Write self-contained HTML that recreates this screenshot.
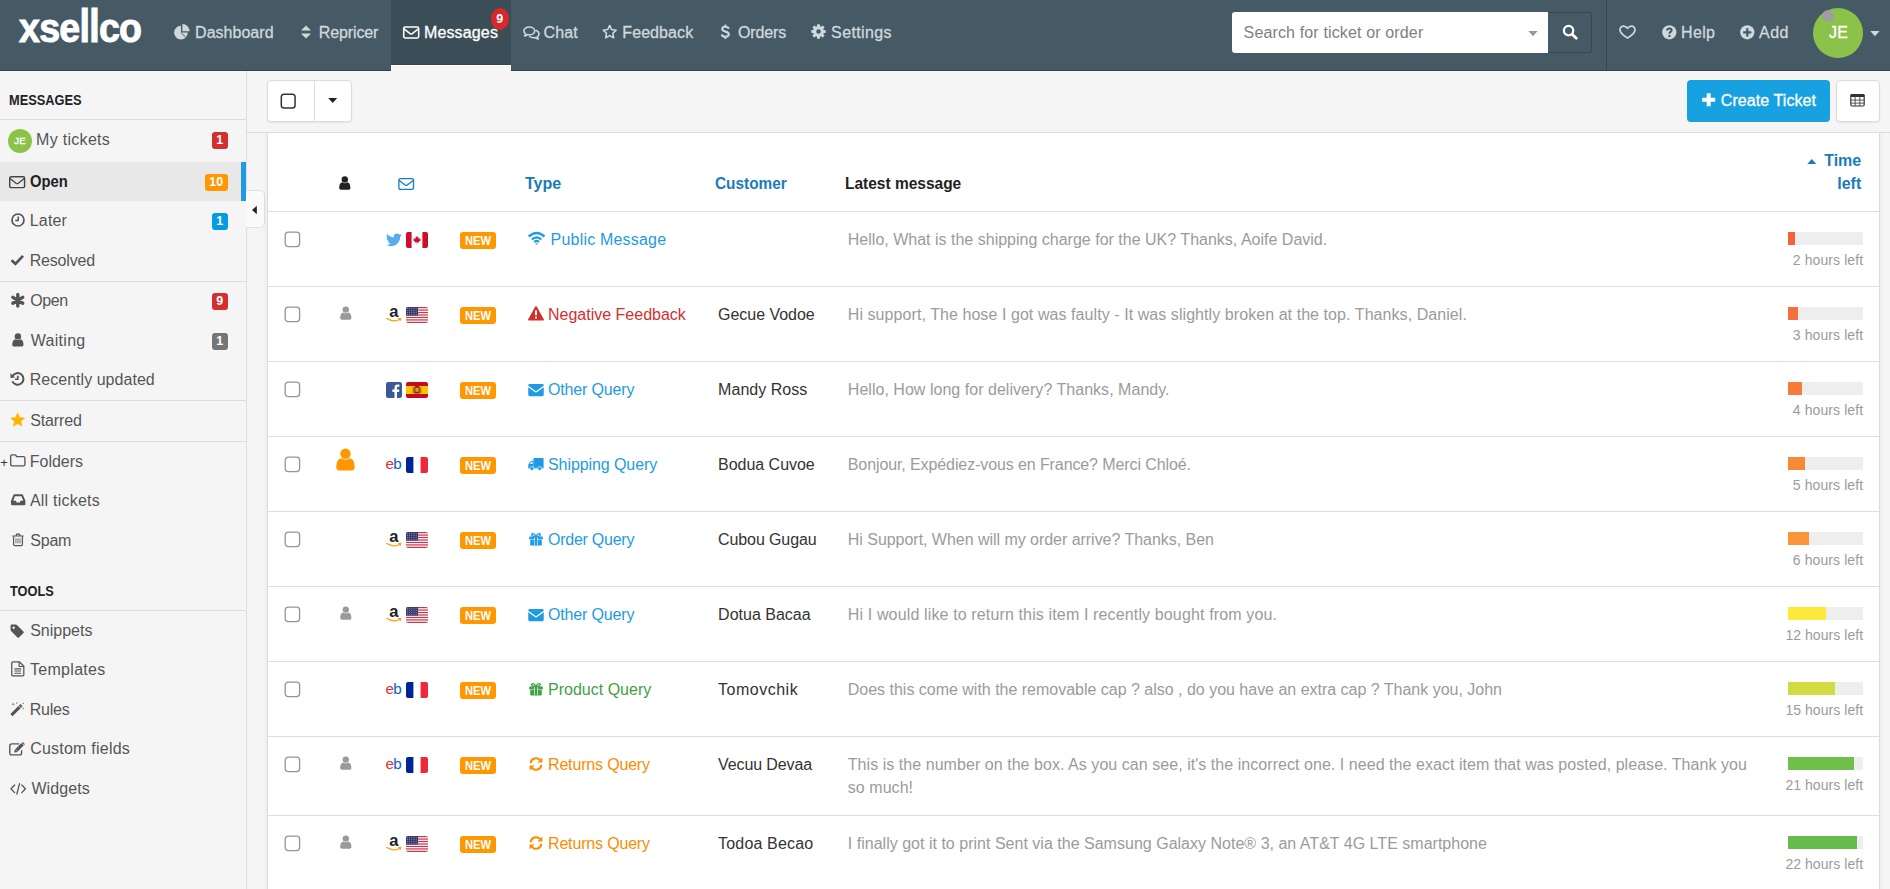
<!DOCTYPE html>
<html lang="en"><head><meta charset="utf-8"><title>Messages</title>
<style>
html,body{margin:0;padding:0}
body{width:1890px;height:889px;overflow:hidden;position:relative;background:#f5f5f5;font-family:"Liberation Sans",sans-serif;font-size:16px;color:#333}
div,span,svg{box-sizing:border-box}
.abs{position:absolute}
svg{display:block;overflow:visible}
</style></head><body>
<header>
<div class="abs" style="left:0;top:0;width:1890px;height:71px;background:#455a64;border-bottom:1px solid #34444c"></div>
<div class="abs" style="left:391px;top:0;width:120px;height:65px;background:#3b4e57;border-bottom:1px solid #35464e"></div>
<div class="abs" style="left:391px;top:65px;width:120px;height:6px;background:#f5f5f5;border-top:1px solid #fff"></div>
<div class="abs" style="left:19.2px;top:3.3px;height:60px;font-size:41.5px;line-height:50px;font-weight:700;color:#fff;white-space:nowrap;transform:scaleX(0.905);transform-origin:0 0;letter-spacing:-0.8px;-webkit-text-stroke:1px #fff">xse<span style="display:inline-block;transform:scaleY(1.13);transform-origin:50% 80%">ll</span>co</div>
<svg style="position:absolute;left:174.00px;top:23.80px;" width="16.4" height="15.6" viewBox="0 0 16 15"><path d="M6.8 1.6 A6.7 6.7 0 1 0 13.5 8.3 L6.8 8.3 Z" fill="#cfd8dc"/><path d="M8.2 0 A7 7 0 0 1 15.2 6.9 L8.2 6.9 Z" fill="#cfd8dc"/><path d="M6.8 8.3 L11.6 13" stroke="#455a64" stroke-width="0.9"/></svg>
<span style="position:absolute;left:195.10px;top:23.00px;font-size:16px;line-height:20px;color:#cfd8dc;white-space:nowrap;letter-spacing:0.020px;-webkit-text-stroke:0.3px;">Dashboard</span>
<svg style="position:absolute;left:301.30px;top:23.50px;" width="10" height="16" viewBox="0 0 10 16"><path d="M0 6.6 L5 1.4 L10 6.6 Z M0 9.4 L5 14.6 L10 9.4 Z" fill="#cfd8dc"/></svg>
<span style="position:absolute;left:318.80px;top:23.00px;font-size:16px;line-height:20px;color:#cfd8dc;white-space:nowrap;letter-spacing:-0.118px;-webkit-text-stroke:0.3px;">Repricer</span>
<svg style="position:absolute;left:403.00px;top:26.30px;" width="16.4" height="13" viewBox="0 0 16 12"><rect x="0.7" y="0.7" width="14.6" height="10.6" rx="1.3" fill="none" stroke="#fff" stroke-width="1.5"/><path d="M1 2.4 L6.9 7 Q8 7.8 9.1 7 L15 2.4" fill="none" stroke="#fff" stroke-width="1.5" stroke-linejoin="round"/></svg>
<span style="position:absolute;left:423.90px;top:23.00px;font-size:16px;line-height:20px;color:#fff;white-space:nowrap;letter-spacing:0.159px;-webkit-text-stroke:0.3px;">Messages</span>
<div class="abs" style="left:490.6px;top:8px;width:18px;height:21.5px;border-radius:50%;background:#d9272e"></div>
<span style="position:absolute;left:496.30px;top:9.00px;font-size:12.5px;line-height:20px;font-weight:700;color:#fff;white-space:nowrap;">9</span>
<svg style="position:absolute;left:523.00px;top:25.50px;" width="17" height="14" viewBox="0 0 17 14"><path d="M6.3 1 C9.3 1 11.7 2.7 11.7 4.9 C11.7 7.1 9.3 8.8 6.3 8.8 C5.7 8.8 5.2 8.7 4.7 8.6 C3.9 9.3 2.9 9.8 1.6 9.9 C2.2 9.3 2.6 8.6 2.7 7.8 C1.6 7.1 0.9 6.1 0.9 4.9 C0.9 2.7 3.3 1 6.3 1 Z" fill="none" stroke="#cfd8dc" stroke-width="1.6" stroke-linejoin="round"/><path d="M13.2 4.6 C14.9 5.3 16 6.5 16 7.9 C16 9.1 15.3 10.1 14.2 10.8 C14.3 11.6 14.7 12.3 15.3 12.9 C14 12.8 13 12.3 12.2 11.6 C11.7 11.7 11.2 11.8 10.6 11.8 C9 11.8 7.6 11.3 6.6 10.5" fill="none" stroke="#cfd8dc" stroke-width="1.6" stroke-linejoin="round" stroke-linecap="round"/></svg>
<span style="position:absolute;left:543.60px;top:23.00px;font-size:16px;line-height:20px;color:#cfd8dc;white-space:nowrap;letter-spacing:0.081px;-webkit-text-stroke:0.3px;">Chat</span>
<svg style="position:absolute;left:602.40px;top:24.00px;" width="15.4" height="15.4" viewBox="0 0 16 16"><polygon points="8.00,1.50 10.06,5.77 14.75,6.41 11.33,9.68 12.17,14.34 8.00,12.10 3.83,14.34 4.67,9.68 1.25,6.41 5.94,5.77" fill="none" stroke="#cfd8dc" stroke-width="1.6" stroke-linejoin="round"/></svg>
<span style="position:absolute;left:622.30px;top:23.00px;font-size:16px;line-height:20px;color:#cfd8dc;white-space:nowrap;letter-spacing:0.082px;-webkit-text-stroke:0.3px;">Feedback</span>
<svg style="position:absolute;left:720.00px;top:24.00px;" width="10.6" height="15.6" viewBox="0 0 11 16"><path d="M9 4.9 C8.8 3.5 7.5 2.8 5.6 2.8 C3.7 2.8 2.3 3.7 2.3 5.2 C2.3 6.8 3.8 7.3 5.6 7.8 C7.6 8.3 9.1 8.9 9.1 10.6 C9.1 12.2 7.6 13.1 5.6 13.1 C3.6 13.1 2.1 12.3 1.9 10.7" fill="none" stroke="#cfd8dc" stroke-width="2.2"/><path d="M5.6 0.4 V3.2 M5.6 12.8 V15.6" stroke="#cfd8dc" stroke-width="1.9"/></svg>
<span style="position:absolute;left:737.90px;top:23.00px;font-size:16px;line-height:20px;color:#cfd8dc;white-space:nowrap;letter-spacing:-0.092px;-webkit-text-stroke:0.3px;">Orders</span>
<svg style="position:absolute;left:811.20px;top:24.30px;" width="15" height="15" viewBox="0 0 16 16"><circle cx="8" cy="8" r="4.1" fill="none" stroke="#cfd8dc" stroke-width="3.3"/><rect x="6.4" y="0.3" width="3.2" height="3.4" rx="0.5" transform="rotate(0 8 8)" fill="#cfd8dc"/><rect x="6.4" y="0.3" width="3.2" height="3.4" rx="0.5" transform="rotate(45 8 8)" fill="#cfd8dc"/><rect x="6.4" y="0.3" width="3.2" height="3.4" rx="0.5" transform="rotate(90 8 8)" fill="#cfd8dc"/><rect x="6.4" y="0.3" width="3.2" height="3.4" rx="0.5" transform="rotate(135 8 8)" fill="#cfd8dc"/><rect x="6.4" y="0.3" width="3.2" height="3.4" rx="0.5" transform="rotate(180 8 8)" fill="#cfd8dc"/><rect x="6.4" y="0.3" width="3.2" height="3.4" rx="0.5" transform="rotate(225 8 8)" fill="#cfd8dc"/><rect x="6.4" y="0.3" width="3.2" height="3.4" rx="0.5" transform="rotate(270 8 8)" fill="#cfd8dc"/><rect x="6.4" y="0.3" width="3.2" height="3.4" rx="0.5" transform="rotate(315 8 8)" fill="#cfd8dc"/></svg>
<span style="position:absolute;left:831.10px;top:23.00px;font-size:16px;line-height:20px;color:#cfd8dc;white-space:nowrap;letter-spacing:0.375px;-webkit-text-stroke:0.3px;">Settings</span>
<div class="abs" style="left:1232px;top:12px;width:316px;height:41px;background:#fff;border-radius:3px 0 0 3px"></div>
<span style="position:absolute;left:1243.60px;top:23.00px;font-size:16px;line-height:20px;color:#808080;white-space:nowrap;letter-spacing:0.143px;">Search for ticket or order</span>
<svg style="position:absolute;left:1528.00px;top:31.00px;" width="10" height="5.6" viewBox="0 0 10 6"><path d="M0 0 H10 L5 5.6 Z" fill="#999"/></svg>
<div class="abs" style="left:1548px;top:12px;width:43.5px;height:40.5px;border:1px solid #37474f;border-left:0;border-radius:0 3px 3px 0"></div>
<svg style="position:absolute;left:1562.00px;top:24.00px;" width="16" height="16" viewBox="0 0 16 16"><circle cx="6.6" cy="6.6" r="4.7" fill="none" stroke="#fff" stroke-width="2.3"/><path d="M10.4 10.4 L14.3 14.3" stroke="#fff" stroke-width="2.8" stroke-linecap="round"/></svg>
<div class="abs" style="left:1606px;top:0;width:1px;height:70px;background:#37474f"></div>
<svg style="position:absolute;left:1619.20px;top:25.20px;" width="17" height="14" viewBox="0 0 17 14"><path d="M8.5 13 C8.5 13 1 8.6 1 4.7 C1 2.5 2.7 1 4.6 1 C6.2 1 7.6 1.9 8.5 3.3 C9.4 1.9 10.8 1 12.4 1 C14.3 1 16 2.5 16 4.7 C16 8.6 8.5 13 8.5 13 Z" fill="none" stroke="#cfd8dc" stroke-width="1.75" stroke-linejoin="round"/></svg>
<svg style="position:absolute;left:1661.50px;top:25.00px;" width="14.6" height="14.6" viewBox="0 0 15 15"><circle cx="7.5" cy="7.5" r="7.3" fill="#cfd8dc"/><path d="M5.2 5.7 C5.2 4.2 6.3 3.5 7.6 3.5 C8.9 3.5 9.9 4.3 9.9 5.5 C9.9 7.1 7.6 7.1 7.6 9" fill="none" stroke="#455a64" stroke-width="2.1"/><circle cx="7.6" cy="11.3" r="1.2" fill="#455a64"/></svg>
<span style="position:absolute;left:1681.10px;top:23.00px;font-size:16px;line-height:20px;color:#cfd8dc;white-space:nowrap;letter-spacing:0.311px;-webkit-text-stroke:0.3px;">Help</span>
<svg style="position:absolute;left:1740.00px;top:25.00px;" width="14.6" height="14.6" viewBox="0 0 15 15"><circle cx="7.5" cy="7.5" r="7.3" fill="#cfd8dc"/><path d="M7.5 3.3 V11.7 M3.3 7.5 H11.7" stroke="#455a64" stroke-width="2.3"/></svg>
<span style="position:absolute;left:1759.10px;top:23.00px;font-size:16px;line-height:20px;color:#cfd8dc;white-space:nowrap;letter-spacing:0.385px;-webkit-text-stroke:0.3px;">Add</span>
<div class="abs" style="left:1812.5px;top:7.6px;width:50.4px;height:50.4px;border-radius:50%;background:#8bc34a"></div>
<span style="position:absolute;left:1829.00px;top:23.00px;font-size:16px;line-height:20px;color:#fff;white-space:nowrap;letter-spacing:0.168px;-webkit-text-stroke:0.3px;">JE</span>
<div class="abs" style="left:1821.6px;top:9.6px;width:12px;height:12px;border-radius:50%;background:#9e9e9e"></div>
<svg style="position:absolute;left:1870.00px;top:30.80px;" width="9.8" height="5.6" viewBox="0 0 10 6"><path d="M0 0 H10 L5 5.6 Z" fill="#cfd8dc"/></svg>
</header>
<aside>
<div class="abs" style="left:246px;top:71px;width:1px;height:818px;background:#ddd"></div>
<span style="position:absolute;left:9.10px;top:90.00px;font-size:14px;line-height:20px;font-weight:700;color:#222;white-space:nowrap;display:inline-block;transform:scaleX(0.9156);transform-origin:left 50%;">MESSAGES</span>
<div class="abs" style="left:0;top:119px;width:246px;height:1px;background:#ddd"></div>
<div class="abs" style="left:8px;top:129px;width:24px;height:24px;border-radius:50%;background:#8bc34a"></div>
<span style="position:absolute;left:14.30px;top:131.00px;font-size:9.5px;line-height:20px;color:#fff;white-space:nowrap;letter-spacing:0.168px;-webkit-text-stroke:0.35px;">JE</span>
<span style="position:absolute;left:36.00px;top:130.00px;font-size:16px;line-height:20px;color:#555;white-space:nowrap;letter-spacing:0.302px;">My tickets</span>
<div class="abs" style="left:212px;top:132px;width:15.6px;height:17px;border-radius:3px;background:#d32f2f;color:#fff;font-size:12.5px;font-weight:700;line-height:17px;text-align:center">1</div>
<div class="abs" style="left:0;top:162px;width:246px;height:39px;background:#e8e8e8;border-right:5px solid #1e9be2"></div>
<svg style="position:absolute;left:9.10px;top:176.20px;" width="16.3" height="12.4" viewBox="0 0 16 12"><rect x="0.7" y="0.7" width="14.6" height="10.6" rx="1.3" fill="none" stroke="#444" stroke-width="1.4"/><path d="M1 2.4 L6.9 7 Q8 7.8 9.1 7 L15 2.4" fill="none" stroke="#444" stroke-width="1.4" stroke-linejoin="round"/></svg>
<span style="position:absolute;left:30.10px;top:172.00px;font-size:16px;line-height:20px;font-weight:700;color:#222;white-space:nowrap;display:inline-block;transform:scaleX(0.9229);transform-origin:left 50%;">Open</span>
<div class="abs" style="left:204.8px;top:174px;width:22.8px;height:17px;border-radius:3px;background:#ff9800;color:#fff;font-size:12.5px;font-weight:700;line-height:17px;text-align:center">10</div>
<svg style="position:absolute;left:10.90px;top:213.10px;" width="14" height="14" viewBox="0 0 14 14"><circle cx="7" cy="7" r="6" fill="none" stroke="#555" stroke-width="1.7"/><path d="M7.2 3.6 V7.4 H4.2" fill="none" stroke="#555" stroke-width="1.5"/></svg>
<span style="position:absolute;left:29.80px;top:211.00px;font-size:16px;line-height:20px;color:#555;white-space:nowrap;letter-spacing:0.143px;">Later</span>
<div class="abs" style="left:212px;top:213px;width:15.6px;height:17px;border-radius:3px;background:#039be5;color:#fff;font-size:12.5px;font-weight:700;line-height:17px;text-align:center">1</div>
<svg style="position:absolute;left:10.40px;top:254.40px;" width="14.6" height="11.6" viewBox="0 0 15 12"><path d="M1.6 6.4 L5.6 10.2 L13.4 1.9" fill="none" stroke="#555" stroke-width="2.9"/></svg>
<span style="position:absolute;left:29.70px;top:251.00px;font-size:16px;line-height:20px;color:#555;white-space:nowrap;letter-spacing:-0.181px;">Resolved</span>
<div class="abs" style="left:0;top:281px;width:246px;height:1px;background:#ddd"></div>
<svg style="position:absolute;left:10.60px;top:292.60px;" width="13.6" height="14.6" viewBox="0 0 14 15"><path d="M7 1.6 V13.4 M1.9 4.5 L12.1 10.5 M12.1 4.5 L1.9 10.5" stroke="#555" stroke-width="3.5" stroke-linecap="round"/></svg>
<span style="position:absolute;left:30.20px;top:291.00px;font-size:16px;line-height:20px;color:#555;white-space:nowrap;letter-spacing:-0.367px;">Open</span>
<div class="abs" style="left:212px;top:293px;width:15.6px;height:17px;border-radius:3px;background:#d32f2f;color:#fff;font-size:12.5px;font-weight:700;line-height:17px;text-align:center">9</div>
<svg style="position:absolute;left:11.60px;top:333.40px;" width="11.8" height="13.6" viewBox="0 0 12 14"><circle cx="6" cy="3.5" r="3.3" fill="#555"/><path d="M0.2 12.2 C0.2 8.6 1.5 6.6 3.4 6.4 C4.1 7 5 7.3 6 7.3 C7 7.3 7.9 7 8.6 6.4 C10.5 6.6 11.8 8.6 11.8 12.2 C11.8 13.3 11.1 14 10 14 H2 C0.9 14 0.2 13.3 0.2 12.2 Z" fill="#555"/></svg>
<span style="position:absolute;left:30.80px;top:331.00px;font-size:16px;line-height:20px;color:#555;white-space:nowrap;letter-spacing:0.280px;">Waiting</span>
<div class="abs" style="left:212px;top:333px;width:15.6px;height:17px;border-radius:3px;background:#757575;color:#fff;font-size:12.5px;font-weight:700;line-height:17px;text-align:center">1</div>
<svg style="position:absolute;left:10.40px;top:372.40px;" width="14.6" height="13.6" viewBox="0 0 15 14"><path d="M2.6 4.2 A6 6 0 1 1 2.4 9.6" fill="none" stroke="#555" stroke-width="2.1"/><path d="M0.3 1.4 L0.6 6.2 L5.3 5.6 Z" fill="#555"/><path d="M8 3.8 V7.5 H5.2" fill="none" stroke="#555" stroke-width="1.7"/></svg>
<span style="position:absolute;left:29.70px;top:370.00px;font-size:16px;line-height:20px;color:#555;white-space:nowrap;letter-spacing:0.034px;">Recently updated</span>
<div class="abs" style="left:0;top:400px;width:246px;height:1px;background:#ddd"></div>
<svg style="position:absolute;left:9.60px;top:411.60px;" width="15.4" height="15.4" viewBox="0 0 16 16"><polygon points="8.00,1.20 10.00,5.85 15.04,6.31 11.23,9.65 12.35,14.59 8.00,12.00 3.65,14.59 4.77,9.65 0.96,6.31 6.00,5.85" fill="#ffb300" stroke="#ffb300" stroke-width="0.8" stroke-linejoin="round"/></svg>
<span style="position:absolute;left:30.20px;top:411.00px;font-size:16px;line-height:20px;color:#555;white-space:nowrap;letter-spacing:-0.139px;">Starred</span>
<div class="abs" style="left:0;top:441px;width:246px;height:1px;background:#ddd"></div>
<span style="position:absolute;left:0.20px;top:453.00px;font-size:13px;line-height:20px;color:#333;white-space:nowrap;">+</span>
<svg style="position:absolute;left:9.60px;top:454.40px;" width="15.6" height="12.8" viewBox="0 0 16 13"><path d="M0.7 2.2 Q0.7 0.8 2.1 0.8 H5.2 Q6.4 0.8 6.4 2 Q6.4 2.6 7.2 2.6 H13.8 Q15.3 2.6 15.3 4.1 V10.7 Q15.3 12.2 13.8 12.2 H2.2 Q0.7 12.2 0.7 10.7 Z" fill="none" stroke="#555" stroke-width="1.35"/></svg>
<span style="position:absolute;left:29.70px;top:452.00px;font-size:16px;line-height:20px;color:#555;white-space:nowrap;letter-spacing:0.014px;">Folders</span>
<svg style="position:absolute;left:10.60px;top:494.00px;" width="14.4" height="11.6" viewBox="0 0 15 12"><path fill-rule="evenodd" d="M3.6 0.3 H11.4 Q12.2 0.3 12.5 1 L14.8 6.6 Q15 7 15 7.5 V10.6 Q15 11.8 13.8 11.8 H1.2 Q0 11.8 0 10.6 V7.5 Q0 7 0.2 6.6 L2.5 1 Q2.8 0.3 3.6 0.3 Z M4.1 2.2 L2.3 6.9 H5.1 L5.9 8.7 H9.1 L9.9 6.9 H12.7 L10.9 2.2 Z" fill="#555"/></svg>
<span style="position:absolute;left:29.90px;top:491.00px;font-size:16px;line-height:20px;color:#555;white-space:nowrap;letter-spacing:0.227px;">All tickets</span>
<svg style="position:absolute;left:11.60px;top:532.60px;" width="12" height="13.6" viewBox="0 0 13 14"><path d="M0.3 2.9 H12.7 M4.3 2.7 L5 0.9 H8 L8.7 2.7" fill="none" stroke="#555" stroke-width="1.3"/><path d="M1.7 3.2 V11.9 Q1.7 13.3 3.1 13.3 H9.9 Q11.3 13.3 11.3 11.9 V3.2" fill="none" stroke="#555" stroke-width="1.3"/><path d="M4.3 5.4 V10.8 M6.5 5.4 V10.8 M8.7 5.4 V10.8" stroke="#555" stroke-width="0.9"/></svg>
<span style="position:absolute;left:30.20px;top:531.00px;font-size:16px;line-height:20px;color:#555;white-space:nowrap;letter-spacing:-0.186px;">Spam</span>
<span style="position:absolute;left:10.10px;top:581.00px;font-size:14px;line-height:20px;font-weight:700;color:#222;white-space:nowrap;display:inline-block;transform:scaleX(0.9102);transform-origin:left 50%;">TOOLS</span>
<div class="abs" style="left:0;top:610px;width:246px;height:1px;background:#ddd"></div>
<svg style="position:absolute;left:10.40px;top:623.60px;" width="14.4" height="14.4" viewBox="0 0 15 15"><path fill-rule="evenodd" d="M0.6 1.8 Q0.6 0.6 1.8 0.6 H6 Q6.8 0.6 7.5 1.3 L14 7.8 Q14.8 8.6 14 9.4 L9.4 14 Q8.6 14.8 7.8 14 L1.3 7.5 Q0.6 6.8 0.6 6 Z M3.8 2.5 A1.3 1.3 0 1 0 3.81 2.5 Z" fill="#555"/></svg>
<span style="position:absolute;left:30.20px;top:621.00px;font-size:16px;line-height:20px;color:#555;white-space:nowrap;letter-spacing:-0.004px;">Snippets</span>
<svg style="position:absolute;left:10.80px;top:661.00px;" width="13.6" height="15.6" viewBox="0 0 14 16"><path d="M0.8 1.9 Q0.8 0.8 1.9 0.8 H8.6 L13.2 5.4 V14.1 Q13.2 15.2 12.1 15.2 H1.9 Q0.8 15.2 0.8 14.1 Z" fill="none" stroke="#555" stroke-width="1.3" stroke-linejoin="round"/><path d="M8.4 1 V5.6 H13" fill="none" stroke="#555" stroke-width="1.2"/><path d="M3.5 8 H10.5 M3.5 10.3 H10.5 M3.5 12.6 H10.5" stroke="#555" stroke-width="1.2"/></svg>
<span style="position:absolute;left:30.00px;top:660.00px;font-size:16px;line-height:20px;color:#555;white-space:nowrap;letter-spacing:0.290px;">Templates</span>
<svg style="position:absolute;left:10.20px;top:701.60px;" width="14.6" height="14.6" viewBox="0 0 15 15"><path d="M1.5 13.5 L11.8 3.2" stroke="#555" stroke-width="3.1" stroke-linecap="butt"/><path d="M9 4 L11 6" stroke="#f5f5f5" stroke-width="0.8"/><path d="M3.2 0.6 L3.6 1.8 L4.8 2.2 L3.6 2.6 L3.2 3.8 L2.8 2.6 L1.6 2.2 L2.8 1.8 Z M7 0 L7.3 0.8 L8.1 1.1 L7.3 1.4 L7 2.2 L6.7 1.4 L5.9 1.1 L6.7 0.8 Z M13.6 5.6 L13.9 6.4 L14.7 6.7 L13.9 7 L13.6 7.8 L13.3 7 L12.5 6.7 L13.3 6.4 Z M13.5 0.2 L13.8 1 L14.6 1.3 L13.8 1.6 L13.5 2.4 L13.2 1.6 L12.4 1.3 L13.2 1 Z" fill="#555"/></svg>
<span style="position:absolute;left:29.70px;top:700.00px;font-size:16px;line-height:20px;color:#555;white-space:nowrap;letter-spacing:-0.217px;">Rules</span>
<svg style="position:absolute;left:9.00px;top:741.60px;" width="16" height="14" viewBox="0 0 16 14"><path d="M12.6 8.6 V10.9 Q12.6 12.9 10.6 12.9 H2.8 Q0.8 12.9 0.8 10.9 V3.9 Q0.8 1.9 2.8 1.9 H9.6" fill="none" stroke="#555" stroke-width="1.4" stroke-linecap="round"/><path d="M5.6 7.9 L12.4 1.1 L14.7 3.4 L7.9 10.2 L5.2 10.6 Z" fill="#555"/><path d="M6.7 7.9 L7.9 9.1" stroke="#f5f5f5" stroke-width="0.7"/><path d="M13.1 0.5 Q13.8 -0.2 14.5 0.5 L15.4 1.4 Q16.1 2.1 15.4 2.8 L15.1 3.1 L12.8 0.8 Z" fill="#555"/></svg>
<span style="position:absolute;left:30.20px;top:739.00px;font-size:16px;line-height:20px;color:#555;white-space:nowrap;letter-spacing:0.226px;">Custom fields</span>
<svg style="position:absolute;left:10.00px;top:783.20px;" width="16.4" height="11.6" viewBox="0 0 17 12"><path d="M4.8 2 L1 6 L4.8 10 M12.2 2 L16 6 L12.2 10 M9.9 0.6 L7.1 11.4" fill="none" stroke="#555" stroke-width="1.35" stroke-linecap="round" stroke-linejoin="round"/></svg>
<span style="position:absolute;left:31.40px;top:779.00px;font-size:16px;line-height:20px;color:#555;white-space:nowrap;letter-spacing:0.107px;">Widgets</span>
<div class="abs" style="left:246px;top:190px;width:18.5px;height:38px;background:#fafafa;border:1px solid #e0e0e0;border-left:0;border-radius:0 5px 5px 0"></div>
<svg style="position:absolute;left:251.60px;top:204.60px;" width="5.2" height="10" viewBox="0 0 6 10"><path d="M5.6 0 V10 L0 5 Z" fill="#222"/></svg>
</aside>
<main>
<div class="abs" style="left:267px;top:80px;width:85px;height:42px;background:#fff;border:1px solid #dcdcdc;border-radius:4px;box-shadow:0 1px 2px rgba(0,0,0,.07)"></div>
<div class="abs" style="left:314px;top:81px;width:1px;height:40px;background:#ddd"></div>
<svg style="position:absolute;left:280.40px;top:92.80px;" width="16.4" height="16.4" viewBox="0 0 16.4 16.4"><rect x="1.3" y="1.3" width="13.8" height="13.8" rx="2.8" fill="#fff" stroke="#333" stroke-width="1.5"/></svg>
<svg style="position:absolute;left:328.00px;top:97.60px;" width="9.4" height="5.4" viewBox="0 0 10 6"><path d="M0 0 H10 L5 5.6 Z" fill="#222"/></svg>
<div class="abs" style="left:1687px;top:80px;width:143px;height:42px;background:#17a1e1;border-radius:4px"></div>
<svg style="position:absolute;left:1702.00px;top:93.00px;" width="13.4" height="13.4" viewBox="0 0 14 14"><path d="M7 0.2 V13.8 M0.2 7 H13.8" stroke="#fff" stroke-width="4.1"/></svg>
<span style="position:absolute;left:1720.80px;top:91.00px;font-size:16px;line-height:20px;color:#fff;white-space:nowrap;letter-spacing:0.082px;-webkit-text-stroke:0.3px;">Create Ticket</span>
<div class="abs" style="left:1836px;top:80px;width:44px;height:42px;background:#fff;border:1px solid #dcdcdc;border-radius:4px;box-shadow:0 1px 2px rgba(0,0,0,.07)"></div>
<svg style="position:absolute;left:1850.00px;top:93.60px;" width="15" height="12.6" viewBox="0 0 15 13"><rect x="0.6" y="0.6" width="13.8" height="11.8" rx="1.2" fill="#fff" stroke="#333" stroke-width="1.2"/><rect x="0.3" y="0.3" width="14.4" height="2.9" rx="1" fill="#333"/><path d="M5.05 2 V12.4 M9.95 2 V12.4 M0.6 6.3 H14.4 M0.6 9.4 H14.4" stroke="#333" stroke-width="0.85"/></svg>
<div class="abs" style="left:247px;top:132px;width:1643px;height:1px;background:#ddd"></div>
<div class="abs" style="left:267px;top:133px;width:1613px;height:760px;background:#fff;border-left:1px solid #dcdcdc;border-right:1px solid #dcdcdc;box-shadow:0 0 6px rgba(0,0,0,.07);clip-path:inset(0 -12px 0 -12px)"></div>
<svg style="position:absolute;left:339.00px;top:176.20px;" width="11.6" height="13.8" viewBox="0 0 12 14"><circle cx="6" cy="3.5" r="3.3" fill="#222"/><path d="M0.2 12.2 C0.2 8.6 1.5 6.6 3.4 6.4 C4.1 7 5 7.3 6 7.3 C7 7.3 7.9 7 8.6 6.4 C10.5 6.6 11.8 8.6 11.8 12.2 C11.8 13.3 11.1 14 10 14 H2 C0.9 14 0.2 13.3 0.2 12.2 Z" fill="#222"/></svg>
<svg style="position:absolute;left:397.60px;top:177.60px;" width="16.4" height="12" viewBox="0 0 16 12"><rect x="0.7" y="0.7" width="14.6" height="10.6" rx="1.3" fill="none" stroke="#1a7bb9" stroke-width="1.3"/><path d="M1 2.4 L6.9 7 Q8 7.8 9.1 7 L15 2.4" fill="none" stroke="#1a7bb9" stroke-width="1.3" stroke-linejoin="round"/></svg>
<span style="position:absolute;left:525.30px;top:174.00px;font-size:16px;line-height:20px;font-weight:700;color:#1a7bb9;white-space:nowrap;display:inline-block;transform:scaleX(1.0023);transform-origin:left 50%;">Type</span>
<span style="position:absolute;left:714.80px;top:174.00px;font-size:16px;line-height:20px;font-weight:700;color:#1a7bb9;white-space:nowrap;display:inline-block;transform:scaleX(0.9620);transform-origin:left 50%;">Customer</span>
<span style="position:absolute;left:845.20px;top:174.00px;font-size:16px;line-height:20px;font-weight:700;color:#222;white-space:nowrap;display:inline-block;transform:scaleX(0.9681);transform-origin:left 50%;">Latest message</span>
<svg style="position:absolute;left:1807.40px;top:158.60px;" width="9.6" height="5.4" viewBox="0 0 10 6"><path d="M0 5.6 H10 L5 0 Z" fill="#1a7bb9"/></svg>
<div class="abs" style="right:28.8px;top:149px;width:60px;text-align:right;font-size:16px;line-height:23px;font-weight:700;color:#1a7bb9;">Time left</div>
<div class="abs" style="left:268px;top:210.5px;width:1611px;height:1.6px;background:#ddd"></div>
<svg style="position:absolute;left:283.90px;top:231.30px;" width="17" height="17" viewBox="0 0 17 17"><rect x="1.2" y="1.2" width="14.4" height="14.4" rx="3" fill="#fff" stroke="#949494" stroke-width="1.3"/></svg>
<svg style="position:absolute;left:386.00px;top:232.20px;" width="15.8" height="15.8" viewBox="0 0 24 24"><path fill="#55acee" d="M23.953 4.57a10 10 0 01-2.825.775 4.958 4.958 0 002.163-2.723c-.951.555-2.005.959-3.127 1.184a4.92 4.92 0 00-8.384 4.482C7.69 8.095 4.067 6.13 1.64 3.162a4.822 4.822 0 00-.666 2.475c0 1.71.87 3.213 2.188 4.096a4.904 4.904 0 01-2.228-.616v.06a4.923 4.923 0 003.946 4.827 4.996 4.996 0 01-2.212.085 4.936 4.936 0 004.604 3.417 9.867 9.867 0 01-6.102 2.105c-.39 0-.779-.023-1.17-.067a13.995 13.995 0 007.557 2.209c9.053 0 13.998-7.496 13.998-13.985 0-.21 0-.42-.015-.63A9.935 9.935 0 0024 4.59z"/></svg>
<svg style="position:absolute;left:406.00px;top:232.00px;" width="22" height="16" viewBox="0 0 22 16"><defs><clipPath id="f0"><rect width="22" height="16" rx="2"/></clipPath></defs><g clip-path="url(#f0)"><rect width="22" height="16" fill="#fff"/><rect width="5.6" height="16" fill="#c8102e"/><rect x="16.4" width="5.6" height="16" fill="#c8102e"/><path d="M11 2.6 L12 4.6 L13.1 4.1 L12.6 6.8 L14 5.6 L14.3 6.4 L15.8 6.1 L15.2 7.8 L15.9 8.2 L13.4 10.2 L13.7 11.2 L11.3 10.8 L11.4 13.4 H10.6 L10.7 10.8 L8.3 11.2 L8.6 10.2 L6.1 8.2 L6.8 7.8 L6.2 6.1 L7.7 6.4 L8 5.6 L9.4 6.8 L8.9 4.1 L10 4.6 Z" fill="#c8102e" transform="translate(11 8) scale(0.78) translate(-11 -8)"/></g></svg>
<div class="abs" style="left:460px;top:232px;width:35.6px;height:16.6px;border-radius:3px;background:#ff9800"></div>
<span style="position:absolute;left:464.60px;top:231.00px;font-size:12.5px;line-height:20px;font-weight:700;color:#fff;white-space:nowrap;display:inline-block;transform:scaleX(0.8958);transform-origin:left 50%;">NEW</span>
<svg style="position:absolute;left:528.40px;top:232.40px;" width="17.2" height="12.8" viewBox="0 0 17 13"><path d="M0.5 4.6 Q8.5 -2.4 16.5 4.6" fill="none" stroke="#1e9be2" stroke-width="2.5"/><path d="M3.6 7.6 Q8.5 3.2 13.4 7.6" fill="none" stroke="#1e9be2" stroke-width="2.3"/><path d="M6 10.1 Q8.5 7.9 11 10.1" fill="none" stroke="#1e9be2" stroke-width="2.1"/><path d="M6.9 11.4 H10.1 L8.5 13 Z" fill="#1e9be2"/></svg>
<span style="position:absolute;left:550.60px;top:230.00px;font-size:16px;line-height:20px;color:#1e9be2;white-space:nowrap;letter-spacing:0.192px;">Public Message</span>
<span style="position:absolute;left:847.80px;top:230.00px;font-size:16px;line-height:20px;color:#9b9b9b;white-space:nowrap;letter-spacing:0.005px;">Hello, What is the shipping charge for the UK? Thanks, Aoife David.</span>
<div class="abs" style="left:1788px;top:232.3px;width:75.2px;height:12.6px;background:#eee"><div style="width:7.2px;height:100%;background:#f4623a"></div></div>
<span style="position:absolute;right:26.80px;top:250.00px;font-size:14px;line-height:20px;color:#9b9b9b;white-space:nowrap;letter-spacing:0.091px;">2 hours left</span>
<div class="abs" style="left:268px;top:286.2px;width:1611px;height:1px;background:#ddd"></div>
<svg style="position:absolute;left:283.90px;top:306.30px;" width="17" height="17" viewBox="0 0 17 17"><rect x="1.2" y="1.2" width="14.4" height="14.4" rx="3" fill="#fff" stroke="#949494" stroke-width="1.3"/></svg>
<svg style="position:absolute;left:339.80px;top:306.40px;" width="11.6" height="14" viewBox="0 0 12 14"><circle cx="6" cy="3.5" r="3.3" fill="#9a9a9a"/><path d="M0.2 12.2 C0.2 8.6 1.5 6.6 3.4 6.4 C4.1 7 5 7.3 6 7.3 C7 7.3 7.9 7 8.6 6.4 C10.5 6.6 11.8 8.6 11.8 12.2 C11.8 13.3 11.1 14 10 14 H2 C0.9 14 0.2 13.3 0.2 12.2 Z" fill="#9a9a9a"/></svg>
<svg style="position:absolute;left:386.00px;top:307.40px;" width="16" height="15" viewBox="0 0 16 15"><text x="7.8" y="10.4" text-anchor="middle" font-family="Liberation Sans, sans-serif" font-weight="700" font-size="16.5" fill="#222">a</text><path d="M0.8 11.6 Q7.2 15.6 13.6 12.4" fill="none" stroke="#ff9900" stroke-width="1.15" stroke-linecap="round"/><path d="M12.3 11.5 L15 11.4 L14.1 13.8" fill="none" stroke="#ff9900" stroke-width="1" stroke-linecap="round" stroke-linejoin="round"/></svg>
<svg style="position:absolute;left:406.00px;top:307.00px;" width="22" height="16" viewBox="0 0 22 16"><defs><clipPath id="f1"><rect width="22" height="16" rx="2"/></clipPath></defs><g clip-path="url(#f1)"><rect width="22" height="16" fill="#fff"/><rect y="0.000" width="22" height="1.231" fill="#c23a4b"/><rect y="2.462" width="22" height="1.231" fill="#c23a4b"/><rect y="4.923" width="22" height="1.231" fill="#c23a4b"/><rect y="7.385" width="22" height="1.231" fill="#c23a4b"/><rect y="9.846" width="22" height="1.231" fill="#c23a4b"/><rect y="12.308" width="22" height="1.231" fill="#c23a4b"/><rect y="14.769" width="22" height="1.231" fill="#c23a4b"/><rect width="12" height="8.615" fill="#3c3b6e"/><rect x="1.00" y="1.00" width="0.7" height="0.7" fill="#bfc0dc"/><rect x="3.20" y="1.00" width="0.7" height="0.7" fill="#bfc0dc"/><rect x="5.40" y="1.00" width="0.7" height="0.7" fill="#bfc0dc"/><rect x="7.60" y="1.00" width="0.7" height="0.7" fill="#bfc0dc"/><rect x="9.80" y="1.00" width="0.7" height="0.7" fill="#bfc0dc"/><rect x="1.00" y="3.00" width="0.7" height="0.7" fill="#bfc0dc"/><rect x="3.20" y="3.00" width="0.7" height="0.7" fill="#bfc0dc"/><rect x="5.40" y="3.00" width="0.7" height="0.7" fill="#bfc0dc"/><rect x="7.60" y="3.00" width="0.7" height="0.7" fill="#bfc0dc"/><rect x="9.80" y="3.00" width="0.7" height="0.7" fill="#bfc0dc"/><rect x="1.00" y="5.00" width="0.7" height="0.7" fill="#bfc0dc"/><rect x="3.20" y="5.00" width="0.7" height="0.7" fill="#bfc0dc"/><rect x="5.40" y="5.00" width="0.7" height="0.7" fill="#bfc0dc"/><rect x="7.60" y="5.00" width="0.7" height="0.7" fill="#bfc0dc"/><rect x="9.80" y="5.00" width="0.7" height="0.7" fill="#bfc0dc"/><rect x="1.00" y="7.00" width="0.7" height="0.7" fill="#bfc0dc"/><rect x="3.20" y="7.00" width="0.7" height="0.7" fill="#bfc0dc"/><rect x="5.40" y="7.00" width="0.7" height="0.7" fill="#bfc0dc"/><rect x="7.60" y="7.00" width="0.7" height="0.7" fill="#bfc0dc"/><rect x="9.80" y="7.00" width="0.7" height="0.7" fill="#bfc0dc"/></g></svg>
<div class="abs" style="left:460px;top:307px;width:35.6px;height:16.6px;border-radius:3px;background:#ff9800"></div>
<span style="position:absolute;left:464.60px;top:306.00px;font-size:12.5px;line-height:20px;font-weight:700;color:#fff;white-space:nowrap;display:inline-block;transform:scaleX(0.8958);transform-origin:left 50%;">NEW</span>
<svg style="position:absolute;left:527.60px;top:306.40px;" width="16" height="14.8" viewBox="0 0 16 15"><path d="M8 0.9 L15.2 13.9 H0.8 Z" fill="#d32f2f" stroke="#d32f2f" stroke-width="1.6" stroke-linejoin="round"/><path d="M8 4.6 V9.3" stroke="#fff" stroke-width="2"/><circle cx="8" cy="11.7" r="1.1" fill="#fff"/></svg>
<span style="position:absolute;left:548.00px;top:305.00px;font-size:16px;line-height:20px;color:#d32f2f;white-space:nowrap;letter-spacing:-0.001px;">Negative Feedback</span>
<span style="position:absolute;left:718.10px;top:305.00px;font-size:16px;line-height:20px;color:#333;white-space:nowrap;letter-spacing:-0.033px;">Gecue Vodoe</span>
<span style="position:absolute;left:847.80px;top:305.00px;font-size:16px;line-height:20px;color:#9b9b9b;white-space:nowrap;letter-spacing:0.068px;">Hi support, The hose I got was faulty - It was slightly broken at the top. Thanks, Daniel.</span>
<div class="abs" style="left:1788px;top:307.3px;width:75.2px;height:12.6px;background:#eee"><div style="width:10.4px;height:100%;background:#f56f3a"></div></div>
<span style="position:absolute;right:26.80px;top:325.00px;font-size:14px;line-height:20px;color:#9b9b9b;white-space:nowrap;letter-spacing:0.091px;">3 hours left</span>
<div class="abs" style="left:268px;top:361.2px;width:1611px;height:1px;background:#ddd"></div>
<svg style="position:absolute;left:283.90px;top:381.30px;" width="17" height="17" viewBox="0 0 17 17"><rect x="1.2" y="1.2" width="14.4" height="14.4" rx="3" fill="#fff" stroke="#949494" stroke-width="1.3"/></svg>
<svg style="position:absolute;left:386.00px;top:382.00px;" width="16" height="16" viewBox="0 0 16 16"><rect width="16" height="16" rx="2.2" fill="#3b5998"/><path d="M11 16 V9.9 h2.05 l.3-2.4 H11 V6 c0-.7.2-1.15 1.2-1.15 h1.25 V2.7 c-.2-.03-.95-.1-1.85-.1 -1.85 0-3.1 1.1-3.1 3.2 v1.7 H6.4 v2.4 h2.1 V16 Z" fill="#fff"/></svg>
<svg style="position:absolute;left:406.00px;top:382.00px;" width="22" height="16" viewBox="0 0 22 16"><defs><clipPath id="f2"><rect width="22" height="16" rx="2"/></clipPath></defs><g clip-path="url(#f2)"><rect width="22" height="16" fill="#c60b1e"/><rect y="4" width="22" height="8" fill="#ffc400"/><rect x="8.2" y="4.6" width="5.6" height="6.8" rx="1.2" fill="#ad1519"/><rect x="9.4" y="5.8" width="3.2" height="4" fill="#c8b100"/><rect x="6.6" y="5.2" width="1.1" height="6" fill="#8a6d3b"/><rect x="14.3" y="5.2" width="1.1" height="6" fill="#8a6d3b"/><rect x="9.2" y="3.4" width="3.6" height="1.6" rx="0.6" fill="#ad1519"/></g></svg>
<div class="abs" style="left:460px;top:382px;width:35.6px;height:16.6px;border-radius:3px;background:#ff9800"></div>
<span style="position:absolute;left:464.60px;top:381.00px;font-size:12.5px;line-height:20px;font-weight:700;color:#fff;white-space:nowrap;display:inline-block;transform:scaleX(0.8958);transform-origin:left 50%;">NEW</span>
<svg style="position:absolute;left:528.00px;top:383.60px;" width="16" height="12.6" viewBox="0 0 16 13"><rect x="0" y="0" width="16" height="12.6" rx="1.5" fill="#1e9be2"/><path d="M-0.2 2.2 L6.9 7.6 Q8 8.4 9.1 7.6 L16.2 2.2" fill="none" stroke="#fff" stroke-width="1.3"/></svg>
<span style="position:absolute;left:548.00px;top:380.00px;font-size:16px;line-height:20px;color:#1e9be2;white-space:nowrap;letter-spacing:-0.159px;">Other Query</span>
<span style="position:absolute;left:718.10px;top:380.00px;font-size:16px;line-height:20px;color:#333;white-space:nowrap;letter-spacing:0.035px;">Mandy Ross</span>
<span style="position:absolute;left:847.80px;top:380.00px;font-size:16px;line-height:20px;color:#9b9b9b;white-space:nowrap;letter-spacing:0.030px;">Hello, How long for delivery? Thanks, Mandy.</span>
<div class="abs" style="left:1788px;top:382.3px;width:75.2px;height:12.6px;background:#eee"><div style="width:13.6px;height:100%;background:#f77d37"></div></div>
<span style="position:absolute;right:26.80px;top:400.00px;font-size:14px;line-height:20px;color:#9b9b9b;white-space:nowrap;letter-spacing:0.091px;">4 hours left</span>
<div class="abs" style="left:268px;top:436.2px;width:1611px;height:1px;background:#ddd"></div>
<svg style="position:absolute;left:283.90px;top:456.30px;" width="17" height="17" viewBox="0 0 17 17"><rect x="1.2" y="1.2" width="14.4" height="14.4" rx="3" fill="#fff" stroke="#949494" stroke-width="1.3"/></svg>
<svg style="position:absolute;left:336.00px;top:448.40px;" width="19" height="22.6" viewBox="0 0 12 14"><circle cx="6" cy="3.5" r="3.3" fill="#ff9800"/><path d="M0.2 12.2 C0.2 8.6 1.5 6.6 3.4 6.4 C4.1 7 5 7.3 6 7.3 C7 7.3 7.9 7 8.6 6.4 C10.5 6.6 11.8 8.6 11.8 12.2 C11.8 13.3 11.1 14 10 14 H2 C0.9 14 0.2 13.3 0.2 12.2 Z" fill="#ff9800"/></svg>
<span class="abs" style="left:385.4px;top:455.9px;font-size:15.2px;line-height:16px;letter-spacing:-0.5px;white-space:nowrap"><span style="color:#e53238">e</span><span style="color:#0064d2">b</span></span>
<svg style="position:absolute;left:406.00px;top:457.00px;" width="22" height="16" viewBox="0 0 22 16"><defs><clipPath id="f3"><rect width="22" height="16" rx="2"/></clipPath></defs><g clip-path="url(#f3)"><rect width="22" height="16" fill="#fff"/><rect width="7.4" height="16" fill="#002395"/><rect x="14.6" width="7.4" height="16" fill="#ed2939"/></g></svg>
<div class="abs" style="left:460px;top:457px;width:35.6px;height:16.6px;border-radius:3px;background:#ff9800"></div>
<span style="position:absolute;left:464.60px;top:456.00px;font-size:12.5px;line-height:20px;font-weight:700;color:#fff;white-space:nowrap;display:inline-block;transform:scaleX(0.8958);transform-origin:left 50%;">NEW</span>
<svg style="position:absolute;left:528.20px;top:458.40px;" width="15.6" height="12.8" viewBox="0 0 16 13"><rect x="5.6" y="0" width="10.4" height="9.6" rx="0.9" fill="#1e9be2"/><path d="M0.4 10.2 V6.6 Q0.4 6 0.8 5.5 L2.7 3.2 Q3.1 2.7 3.8 2.7 H5.6 V10.2 Z" fill="#1e9be2"/><path d="M1.7 6.2 L3.6 3.9 H4.6 V6.2 Z" fill="#fff"/><rect x="0" y="9.4" width="16" height="1.2" fill="#1e9be2"/><circle cx="4" cy="10.8" r="2" fill="#1e9be2" stroke="#fff" stroke-width="0.7"/><circle cx="12" cy="10.8" r="2" fill="#1e9be2" stroke="#fff" stroke-width="0.7"/></svg>
<span style="position:absolute;left:548.00px;top:455.00px;font-size:16px;line-height:20px;color:#1e9be2;white-space:nowrap;letter-spacing:-0.081px;">Shipping Query</span>
<span style="position:absolute;left:718.10px;top:455.00px;font-size:16px;line-height:20px;color:#333;white-space:nowrap;letter-spacing:-0.032px;">Bodua Cuvoe</span>
<span style="position:absolute;left:847.80px;top:455.00px;font-size:16px;line-height:20px;color:#9b9b9b;white-space:nowrap;letter-spacing:-0.102px;">Bonjour, Expédiez-vous en France? Merci Chloé.</span>
<div class="abs" style="left:1788px;top:457.3px;width:75.2px;height:12.6px;background:#eee"><div style="width:16.6px;height:100%;background:#f78a35"></div></div>
<span style="position:absolute;right:26.80px;top:475.00px;font-size:14px;line-height:20px;color:#9b9b9b;white-space:nowrap;letter-spacing:0.091px;">5 hours left</span>
<div class="abs" style="left:268px;top:511.2px;width:1611px;height:1px;background:#ddd"></div>
<svg style="position:absolute;left:283.90px;top:531.30px;" width="17" height="17" viewBox="0 0 17 17"><rect x="1.2" y="1.2" width="14.4" height="14.4" rx="3" fill="#fff" stroke="#949494" stroke-width="1.3"/></svg>
<svg style="position:absolute;left:386.00px;top:532.40px;" width="16" height="15" viewBox="0 0 16 15"><text x="7.8" y="10.4" text-anchor="middle" font-family="Liberation Sans, sans-serif" font-weight="700" font-size="16.5" fill="#222">a</text><path d="M0.8 11.6 Q7.2 15.6 13.6 12.4" fill="none" stroke="#ff9900" stroke-width="1.15" stroke-linecap="round"/><path d="M12.3 11.5 L15 11.4 L14.1 13.8" fill="none" stroke="#ff9900" stroke-width="1" stroke-linecap="round" stroke-linejoin="round"/></svg>
<svg style="position:absolute;left:406.00px;top:532.00px;" width="22" height="16" viewBox="0 0 22 16"><defs><clipPath id="f4"><rect width="22" height="16" rx="2"/></clipPath></defs><g clip-path="url(#f4)"><rect width="22" height="16" fill="#fff"/><rect y="0.000" width="22" height="1.231" fill="#c23a4b"/><rect y="2.462" width="22" height="1.231" fill="#c23a4b"/><rect y="4.923" width="22" height="1.231" fill="#c23a4b"/><rect y="7.385" width="22" height="1.231" fill="#c23a4b"/><rect y="9.846" width="22" height="1.231" fill="#c23a4b"/><rect y="12.308" width="22" height="1.231" fill="#c23a4b"/><rect y="14.769" width="22" height="1.231" fill="#c23a4b"/><rect width="12" height="8.615" fill="#3c3b6e"/><rect x="1.00" y="1.00" width="0.7" height="0.7" fill="#bfc0dc"/><rect x="3.20" y="1.00" width="0.7" height="0.7" fill="#bfc0dc"/><rect x="5.40" y="1.00" width="0.7" height="0.7" fill="#bfc0dc"/><rect x="7.60" y="1.00" width="0.7" height="0.7" fill="#bfc0dc"/><rect x="9.80" y="1.00" width="0.7" height="0.7" fill="#bfc0dc"/><rect x="1.00" y="3.00" width="0.7" height="0.7" fill="#bfc0dc"/><rect x="3.20" y="3.00" width="0.7" height="0.7" fill="#bfc0dc"/><rect x="5.40" y="3.00" width="0.7" height="0.7" fill="#bfc0dc"/><rect x="7.60" y="3.00" width="0.7" height="0.7" fill="#bfc0dc"/><rect x="9.80" y="3.00" width="0.7" height="0.7" fill="#bfc0dc"/><rect x="1.00" y="5.00" width="0.7" height="0.7" fill="#bfc0dc"/><rect x="3.20" y="5.00" width="0.7" height="0.7" fill="#bfc0dc"/><rect x="5.40" y="5.00" width="0.7" height="0.7" fill="#bfc0dc"/><rect x="7.60" y="5.00" width="0.7" height="0.7" fill="#bfc0dc"/><rect x="9.80" y="5.00" width="0.7" height="0.7" fill="#bfc0dc"/><rect x="1.00" y="7.00" width="0.7" height="0.7" fill="#bfc0dc"/><rect x="3.20" y="7.00" width="0.7" height="0.7" fill="#bfc0dc"/><rect x="5.40" y="7.00" width="0.7" height="0.7" fill="#bfc0dc"/><rect x="7.60" y="7.00" width="0.7" height="0.7" fill="#bfc0dc"/><rect x="9.80" y="7.00" width="0.7" height="0.7" fill="#bfc0dc"/></g></svg>
<div class="abs" style="left:460px;top:532px;width:35.6px;height:16.6px;border-radius:3px;background:#ff9800"></div>
<span style="position:absolute;left:464.60px;top:531.00px;font-size:12.5px;line-height:20px;font-weight:700;color:#fff;white-space:nowrap;display:inline-block;transform:scaleX(0.8958);transform-origin:left 50%;">NEW</span>
<svg style="position:absolute;left:529.00px;top:533.00px;" width="14" height="12.6" viewBox="0 0 14 13"><rect x="0" y="3.6" width="14" height="3.1" rx="0.5" fill="#1e9be2"/><rect x="1" y="7.3" width="12" height="5.5" rx="0.8" fill="#1e9be2"/><rect x="5.3" y="3.6" width="3.4" height="9.2" fill="#fff"/><rect x="5.9" y="3.6" width="2.2" height="9.2" fill="#1e9be2"/><path d="M6.9 3.6 C4.5 3.6 2.6 3.2 2.6 1.8 C2.6 0.2 5.2 -0.1 6.9 3.4 C8.8 -0.1 11.4 0.2 11.4 1.8 C11.4 3.2 9.5 3.6 7.1 3.6" fill="none" stroke="#1e9be2" stroke-width="1.4"/></svg>
<span style="position:absolute;left:548.00px;top:530.00px;font-size:16px;line-height:20px;color:#1e9be2;white-space:nowrap;letter-spacing:-0.248px;">Order Query</span>
<span style="position:absolute;left:718.10px;top:530.00px;font-size:16px;line-height:20px;color:#333;white-space:nowrap;letter-spacing:-0.110px;">Cubou Gugau</span>
<span style="position:absolute;left:847.80px;top:530.00px;font-size:16px;line-height:20px;color:#9b9b9b;white-space:nowrap;letter-spacing:-0.035px;">Hi Support, When will my order arrive? Thanks, Ben</span>
<div class="abs" style="left:1788px;top:532.3px;width:75.2px;height:12.6px;background:#eee"><div style="width:20.6px;height:100%;background:#f9963a"></div></div>
<span style="position:absolute;right:26.80px;top:550.00px;font-size:14px;line-height:20px;color:#9b9b9b;white-space:nowrap;letter-spacing:0.091px;">6 hours left</span>
<div class="abs" style="left:268px;top:586.2px;width:1611px;height:1px;background:#ddd"></div>
<svg style="position:absolute;left:283.90px;top:606.30px;" width="17" height="17" viewBox="0 0 17 17"><rect x="1.2" y="1.2" width="14.4" height="14.4" rx="3" fill="#fff" stroke="#949494" stroke-width="1.3"/></svg>
<svg style="position:absolute;left:339.80px;top:606.40px;" width="11.6" height="14" viewBox="0 0 12 14"><circle cx="6" cy="3.5" r="3.3" fill="#9a9a9a"/><path d="M0.2 12.2 C0.2 8.6 1.5 6.6 3.4 6.4 C4.1 7 5 7.3 6 7.3 C7 7.3 7.9 7 8.6 6.4 C10.5 6.6 11.8 8.6 11.8 12.2 C11.8 13.3 11.1 14 10 14 H2 C0.9 14 0.2 13.3 0.2 12.2 Z" fill="#9a9a9a"/></svg>
<svg style="position:absolute;left:386.00px;top:607.40px;" width="16" height="15" viewBox="0 0 16 15"><text x="7.8" y="10.4" text-anchor="middle" font-family="Liberation Sans, sans-serif" font-weight="700" font-size="16.5" fill="#222">a</text><path d="M0.8 11.6 Q7.2 15.6 13.6 12.4" fill="none" stroke="#ff9900" stroke-width="1.15" stroke-linecap="round"/><path d="M12.3 11.5 L15 11.4 L14.1 13.8" fill="none" stroke="#ff9900" stroke-width="1" stroke-linecap="round" stroke-linejoin="round"/></svg>
<svg style="position:absolute;left:406.00px;top:607.00px;" width="22" height="16" viewBox="0 0 22 16"><defs><clipPath id="f5"><rect width="22" height="16" rx="2"/></clipPath></defs><g clip-path="url(#f5)"><rect width="22" height="16" fill="#fff"/><rect y="0.000" width="22" height="1.231" fill="#c23a4b"/><rect y="2.462" width="22" height="1.231" fill="#c23a4b"/><rect y="4.923" width="22" height="1.231" fill="#c23a4b"/><rect y="7.385" width="22" height="1.231" fill="#c23a4b"/><rect y="9.846" width="22" height="1.231" fill="#c23a4b"/><rect y="12.308" width="22" height="1.231" fill="#c23a4b"/><rect y="14.769" width="22" height="1.231" fill="#c23a4b"/><rect width="12" height="8.615" fill="#3c3b6e"/><rect x="1.00" y="1.00" width="0.7" height="0.7" fill="#bfc0dc"/><rect x="3.20" y="1.00" width="0.7" height="0.7" fill="#bfc0dc"/><rect x="5.40" y="1.00" width="0.7" height="0.7" fill="#bfc0dc"/><rect x="7.60" y="1.00" width="0.7" height="0.7" fill="#bfc0dc"/><rect x="9.80" y="1.00" width="0.7" height="0.7" fill="#bfc0dc"/><rect x="1.00" y="3.00" width="0.7" height="0.7" fill="#bfc0dc"/><rect x="3.20" y="3.00" width="0.7" height="0.7" fill="#bfc0dc"/><rect x="5.40" y="3.00" width="0.7" height="0.7" fill="#bfc0dc"/><rect x="7.60" y="3.00" width="0.7" height="0.7" fill="#bfc0dc"/><rect x="9.80" y="3.00" width="0.7" height="0.7" fill="#bfc0dc"/><rect x="1.00" y="5.00" width="0.7" height="0.7" fill="#bfc0dc"/><rect x="3.20" y="5.00" width="0.7" height="0.7" fill="#bfc0dc"/><rect x="5.40" y="5.00" width="0.7" height="0.7" fill="#bfc0dc"/><rect x="7.60" y="5.00" width="0.7" height="0.7" fill="#bfc0dc"/><rect x="9.80" y="5.00" width="0.7" height="0.7" fill="#bfc0dc"/><rect x="1.00" y="7.00" width="0.7" height="0.7" fill="#bfc0dc"/><rect x="3.20" y="7.00" width="0.7" height="0.7" fill="#bfc0dc"/><rect x="5.40" y="7.00" width="0.7" height="0.7" fill="#bfc0dc"/><rect x="7.60" y="7.00" width="0.7" height="0.7" fill="#bfc0dc"/><rect x="9.80" y="7.00" width="0.7" height="0.7" fill="#bfc0dc"/></g></svg>
<div class="abs" style="left:460px;top:607px;width:35.6px;height:16.6px;border-radius:3px;background:#ff9800"></div>
<span style="position:absolute;left:464.60px;top:606.00px;font-size:12.5px;line-height:20px;font-weight:700;color:#fff;white-space:nowrap;display:inline-block;transform:scaleX(0.8958);transform-origin:left 50%;">NEW</span>
<svg style="position:absolute;left:528.00px;top:608.60px;" width="16" height="12.6" viewBox="0 0 16 13"><rect x="0" y="0" width="16" height="12.6" rx="1.5" fill="#1e9be2"/><path d="M-0.2 2.2 L6.9 7.6 Q8 8.4 9.1 7.6 L16.2 2.2" fill="none" stroke="#fff" stroke-width="1.3"/></svg>
<span style="position:absolute;left:548.00px;top:605.00px;font-size:16px;line-height:20px;color:#1e9be2;white-space:nowrap;letter-spacing:-0.159px;">Other Query</span>
<span style="position:absolute;left:718.10px;top:605.00px;font-size:16px;line-height:20px;color:#333;white-space:nowrap;letter-spacing:0.003px;">Dotua Bacaa</span>
<span style="position:absolute;left:847.80px;top:605.00px;font-size:16px;line-height:20px;color:#9b9b9b;white-space:nowrap;letter-spacing:0.137px;">Hi I would like to return this item I recently bought from you.</span>
<div class="abs" style="left:1788px;top:607.3px;width:75.2px;height:12.6px;background:#eee"><div style="width:38.2px;height:100%;background:#fde93d"></div></div>
<span style="position:absolute;right:26.80px;top:625.00px;font-size:14px;line-height:20px;color:#9b9b9b;white-space:nowrap;letter-spacing:0.059px;">12 hours left</span>
<div class="abs" style="left:268px;top:661.2px;width:1611px;height:1px;background:#ddd"></div>
<svg style="position:absolute;left:283.90px;top:681.30px;" width="17" height="17" viewBox="0 0 17 17"><rect x="1.2" y="1.2" width="14.4" height="14.4" rx="3" fill="#fff" stroke="#949494" stroke-width="1.3"/></svg>
<span class="abs" style="left:385.4px;top:680.9px;font-size:15.2px;line-height:16px;letter-spacing:-0.5px;white-space:nowrap"><span style="color:#e53238">e</span><span style="color:#0064d2">b</span></span>
<svg style="position:absolute;left:406.00px;top:682.00px;" width="22" height="16" viewBox="0 0 22 16"><defs><clipPath id="f6"><rect width="22" height="16" rx="2"/></clipPath></defs><g clip-path="url(#f6)"><rect width="22" height="16" fill="#fff"/><rect width="7.4" height="16" fill="#002395"/><rect x="14.6" width="7.4" height="16" fill="#ed2939"/></g></svg>
<div class="abs" style="left:460px;top:682px;width:35.6px;height:16.6px;border-radius:3px;background:#ff9800"></div>
<span style="position:absolute;left:464.60px;top:681.00px;font-size:12.5px;line-height:20px;font-weight:700;color:#fff;white-space:nowrap;display:inline-block;transform:scaleX(0.8958);transform-origin:left 50%;">NEW</span>
<svg style="position:absolute;left:529.00px;top:683.00px;" width="14" height="12.6" viewBox="0 0 14 13"><rect x="0" y="3.6" width="14" height="3.1" rx="0.5" fill="#43a047"/><rect x="1" y="7.3" width="12" height="5.5" rx="0.8" fill="#43a047"/><rect x="5.3" y="3.6" width="3.4" height="9.2" fill="#fff"/><rect x="5.9" y="3.6" width="2.2" height="9.2" fill="#43a047"/><path d="M6.9 3.6 C4.5 3.6 2.6 3.2 2.6 1.8 C2.6 0.2 5.2 -0.1 6.9 3.4 C8.8 -0.1 11.4 0.2 11.4 1.8 C11.4 3.2 9.5 3.6 7.1 3.6" fill="none" stroke="#43a047" stroke-width="1.4"/></svg>
<span style="position:absolute;left:548.00px;top:680.00px;font-size:16px;line-height:20px;color:#43a047;white-space:nowrap;letter-spacing:0.007px;">Product Query</span>
<span style="position:absolute;left:718.10px;top:680.00px;font-size:16px;line-height:20px;color:#333;white-space:nowrap;letter-spacing:0.495px;">Tomovchik</span>
<span style="position:absolute;left:847.80px;top:680.00px;font-size:16px;line-height:20px;color:#9b9b9b;white-space:nowrap;letter-spacing:-0.012px;">Does this come with the removable cap ? also , do you have an extra cap ? Thank you, John</span>
<div class="abs" style="left:1788px;top:682.3px;width:75.2px;height:12.6px;background:#eee"><div style="width:47.4px;height:100%;background:#d0dc42"></div></div>
<span style="position:absolute;right:26.80px;top:700.00px;font-size:14px;line-height:20px;color:#9b9b9b;white-space:nowrap;letter-spacing:0.059px;">15 hours left</span>
<div class="abs" style="left:268px;top:736.2px;width:1611px;height:1px;background:#ddd"></div>
<svg style="position:absolute;left:283.90px;top:756.30px;" width="17" height="17" viewBox="0 0 17 17"><rect x="1.2" y="1.2" width="14.4" height="14.4" rx="3" fill="#fff" stroke="#949494" stroke-width="1.3"/></svg>
<svg style="position:absolute;left:339.80px;top:756.40px;" width="11.6" height="14" viewBox="0 0 12 14"><circle cx="6" cy="3.5" r="3.3" fill="#9a9a9a"/><path d="M0.2 12.2 C0.2 8.6 1.5 6.6 3.4 6.4 C4.1 7 5 7.3 6 7.3 C7 7.3 7.9 7 8.6 6.4 C10.5 6.6 11.8 8.6 11.8 12.2 C11.8 13.3 11.1 14 10 14 H2 C0.9 14 0.2 13.3 0.2 12.2 Z" fill="#9a9a9a"/></svg>
<span class="abs" style="left:385.4px;top:755.9px;font-size:15.2px;line-height:16px;letter-spacing:-0.5px;white-space:nowrap"><span style="color:#e53238">e</span><span style="color:#0064d2">b</span></span>
<svg style="position:absolute;left:406.00px;top:757.00px;" width="22" height="16" viewBox="0 0 22 16"><defs><clipPath id="f7"><rect width="22" height="16" rx="2"/></clipPath></defs><g clip-path="url(#f7)"><rect width="22" height="16" fill="#fff"/><rect width="7.4" height="16" fill="#002395"/><rect x="14.6" width="7.4" height="16" fill="#ed2939"/></g></svg>
<div class="abs" style="left:460px;top:757px;width:35.6px;height:16.6px;border-radius:3px;background:#ff9800"></div>
<span style="position:absolute;left:464.60px;top:756.00px;font-size:12.5px;line-height:20px;font-weight:700;color:#fff;white-space:nowrap;display:inline-block;transform:scaleX(0.8958);transform-origin:left 50%;">NEW</span>
<svg style="position:absolute;left:529.00px;top:757.00px;" width="14" height="14" viewBox="0 0 14 14"><path d="M1.6 6.2 A5.5 5.5 0 0 1 11.2 3.2" fill="none" stroke="#fb8c00" stroke-width="2"/><path d="M13.4 0.6 V5.6 H8.4 Z" fill="#fb8c00"/><path d="M12.4 7.8 A5.5 5.5 0 0 1 2.8 10.8" fill="none" stroke="#fb8c00" stroke-width="2"/><path d="M0.6 13.4 V8.4 H5.6 Z" fill="#fb8c00"/></svg>
<span style="position:absolute;left:548.00px;top:755.00px;font-size:16px;line-height:20px;color:#fb8c00;white-space:nowrap;letter-spacing:-0.167px;">Returns Query</span>
<span style="position:absolute;left:718.10px;top:755.00px;font-size:16px;line-height:20px;color:#333;white-space:nowrap;letter-spacing:-0.114px;">Vecuu Devaa</span>
<span style="position:absolute;left:847.8px;top:753px;font-size:16px;line-height:23px;color:#9b9b9b;white-space:nowrap;letter-spacing:0.048px">This is the number on the box. As you can see, it's the incorrect one. I need the exact item that was posted, please. Thank you <br>so much!</span>
<div class="abs" style="left:1788px;top:757.3px;width:75.2px;height:12.6px;background:#eee"><div style="width:66px;height:100%;background:#6fbf4b"></div></div>
<span style="position:absolute;right:26.80px;top:775.00px;font-size:14px;line-height:20px;color:#9b9b9b;white-space:nowrap;letter-spacing:0.059px;">21 hours left</span>
<div class="abs" style="left:268px;top:815.2px;width:1611px;height:1px;background:#ddd"></div>
<svg style="position:absolute;left:283.90px;top:835.30px;" width="17" height="17" viewBox="0 0 17 17"><rect x="1.2" y="1.2" width="14.4" height="14.4" rx="3" fill="#fff" stroke="#949494" stroke-width="1.3"/></svg>
<svg style="position:absolute;left:339.80px;top:835.40px;" width="11.6" height="14" viewBox="0 0 12 14"><circle cx="6" cy="3.5" r="3.3" fill="#9a9a9a"/><path d="M0.2 12.2 C0.2 8.6 1.5 6.6 3.4 6.4 C4.1 7 5 7.3 6 7.3 C7 7.3 7.9 7 8.6 6.4 C10.5 6.6 11.8 8.6 11.8 12.2 C11.8 13.3 11.1 14 10 14 H2 C0.9 14 0.2 13.3 0.2 12.2 Z" fill="#9a9a9a"/></svg>
<svg style="position:absolute;left:386.00px;top:836.40px;" width="16" height="15" viewBox="0 0 16 15"><text x="7.8" y="10.4" text-anchor="middle" font-family="Liberation Sans, sans-serif" font-weight="700" font-size="16.5" fill="#222">a</text><path d="M0.8 11.6 Q7.2 15.6 13.6 12.4" fill="none" stroke="#ff9900" stroke-width="1.15" stroke-linecap="round"/><path d="M12.3 11.5 L15 11.4 L14.1 13.8" fill="none" stroke="#ff9900" stroke-width="1" stroke-linecap="round" stroke-linejoin="round"/></svg>
<svg style="position:absolute;left:406.00px;top:836.00px;" width="22" height="16" viewBox="0 0 22 16"><defs><clipPath id="f8"><rect width="22" height="16" rx="2"/></clipPath></defs><g clip-path="url(#f8)"><rect width="22" height="16" fill="#fff"/><rect y="0.000" width="22" height="1.231" fill="#c23a4b"/><rect y="2.462" width="22" height="1.231" fill="#c23a4b"/><rect y="4.923" width="22" height="1.231" fill="#c23a4b"/><rect y="7.385" width="22" height="1.231" fill="#c23a4b"/><rect y="9.846" width="22" height="1.231" fill="#c23a4b"/><rect y="12.308" width="22" height="1.231" fill="#c23a4b"/><rect y="14.769" width="22" height="1.231" fill="#c23a4b"/><rect width="12" height="8.615" fill="#3c3b6e"/><rect x="1.00" y="1.00" width="0.7" height="0.7" fill="#bfc0dc"/><rect x="3.20" y="1.00" width="0.7" height="0.7" fill="#bfc0dc"/><rect x="5.40" y="1.00" width="0.7" height="0.7" fill="#bfc0dc"/><rect x="7.60" y="1.00" width="0.7" height="0.7" fill="#bfc0dc"/><rect x="9.80" y="1.00" width="0.7" height="0.7" fill="#bfc0dc"/><rect x="1.00" y="3.00" width="0.7" height="0.7" fill="#bfc0dc"/><rect x="3.20" y="3.00" width="0.7" height="0.7" fill="#bfc0dc"/><rect x="5.40" y="3.00" width="0.7" height="0.7" fill="#bfc0dc"/><rect x="7.60" y="3.00" width="0.7" height="0.7" fill="#bfc0dc"/><rect x="9.80" y="3.00" width="0.7" height="0.7" fill="#bfc0dc"/><rect x="1.00" y="5.00" width="0.7" height="0.7" fill="#bfc0dc"/><rect x="3.20" y="5.00" width="0.7" height="0.7" fill="#bfc0dc"/><rect x="5.40" y="5.00" width="0.7" height="0.7" fill="#bfc0dc"/><rect x="7.60" y="5.00" width="0.7" height="0.7" fill="#bfc0dc"/><rect x="9.80" y="5.00" width="0.7" height="0.7" fill="#bfc0dc"/><rect x="1.00" y="7.00" width="0.7" height="0.7" fill="#bfc0dc"/><rect x="3.20" y="7.00" width="0.7" height="0.7" fill="#bfc0dc"/><rect x="5.40" y="7.00" width="0.7" height="0.7" fill="#bfc0dc"/><rect x="7.60" y="7.00" width="0.7" height="0.7" fill="#bfc0dc"/><rect x="9.80" y="7.00" width="0.7" height="0.7" fill="#bfc0dc"/></g></svg>
<div class="abs" style="left:460px;top:836px;width:35.6px;height:16.6px;border-radius:3px;background:#ff9800"></div>
<span style="position:absolute;left:464.60px;top:835.00px;font-size:12.5px;line-height:20px;font-weight:700;color:#fff;white-space:nowrap;display:inline-block;transform:scaleX(0.8958);transform-origin:left 50%;">NEW</span>
<svg style="position:absolute;left:529.00px;top:836.00px;" width="14" height="14" viewBox="0 0 14 14"><path d="M1.6 6.2 A5.5 5.5 0 0 1 11.2 3.2" fill="none" stroke="#fb8c00" stroke-width="2"/><path d="M13.4 0.6 V5.6 H8.4 Z" fill="#fb8c00"/><path d="M12.4 7.8 A5.5 5.5 0 0 1 2.8 10.8" fill="none" stroke="#fb8c00" stroke-width="2"/><path d="M0.6 13.4 V8.4 H5.6 Z" fill="#fb8c00"/></svg>
<span style="position:absolute;left:548.00px;top:834.00px;font-size:16px;line-height:20px;color:#fb8c00;white-space:nowrap;letter-spacing:-0.167px;">Returns Query</span>
<span style="position:absolute;left:718.10px;top:834.00px;font-size:16px;line-height:20px;color:#333;white-space:nowrap;letter-spacing:0.163px;">Todoa Becao</span>
<span style="position:absolute;left:847.80px;top:834.00px;font-size:16px;line-height:20px;color:#9b9b9b;white-space:nowrap;letter-spacing:0.014px;">I finally got it to print Sent via the Samsung Galaxy Note® 3, an AT&amp;T 4G LTE smartphone</span>
<div class="abs" style="left:1788px;top:836.3px;width:75.2px;height:12.6px;background:#eee"><div style="width:69.2px;height:100%;background:#66bb4d"></div></div>
<span style="position:absolute;right:26.80px;top:854.00px;font-size:14px;line-height:20px;color:#9b9b9b;white-space:nowrap;letter-spacing:0.059px;">22 hours left</span>
</main>
</body></html>
